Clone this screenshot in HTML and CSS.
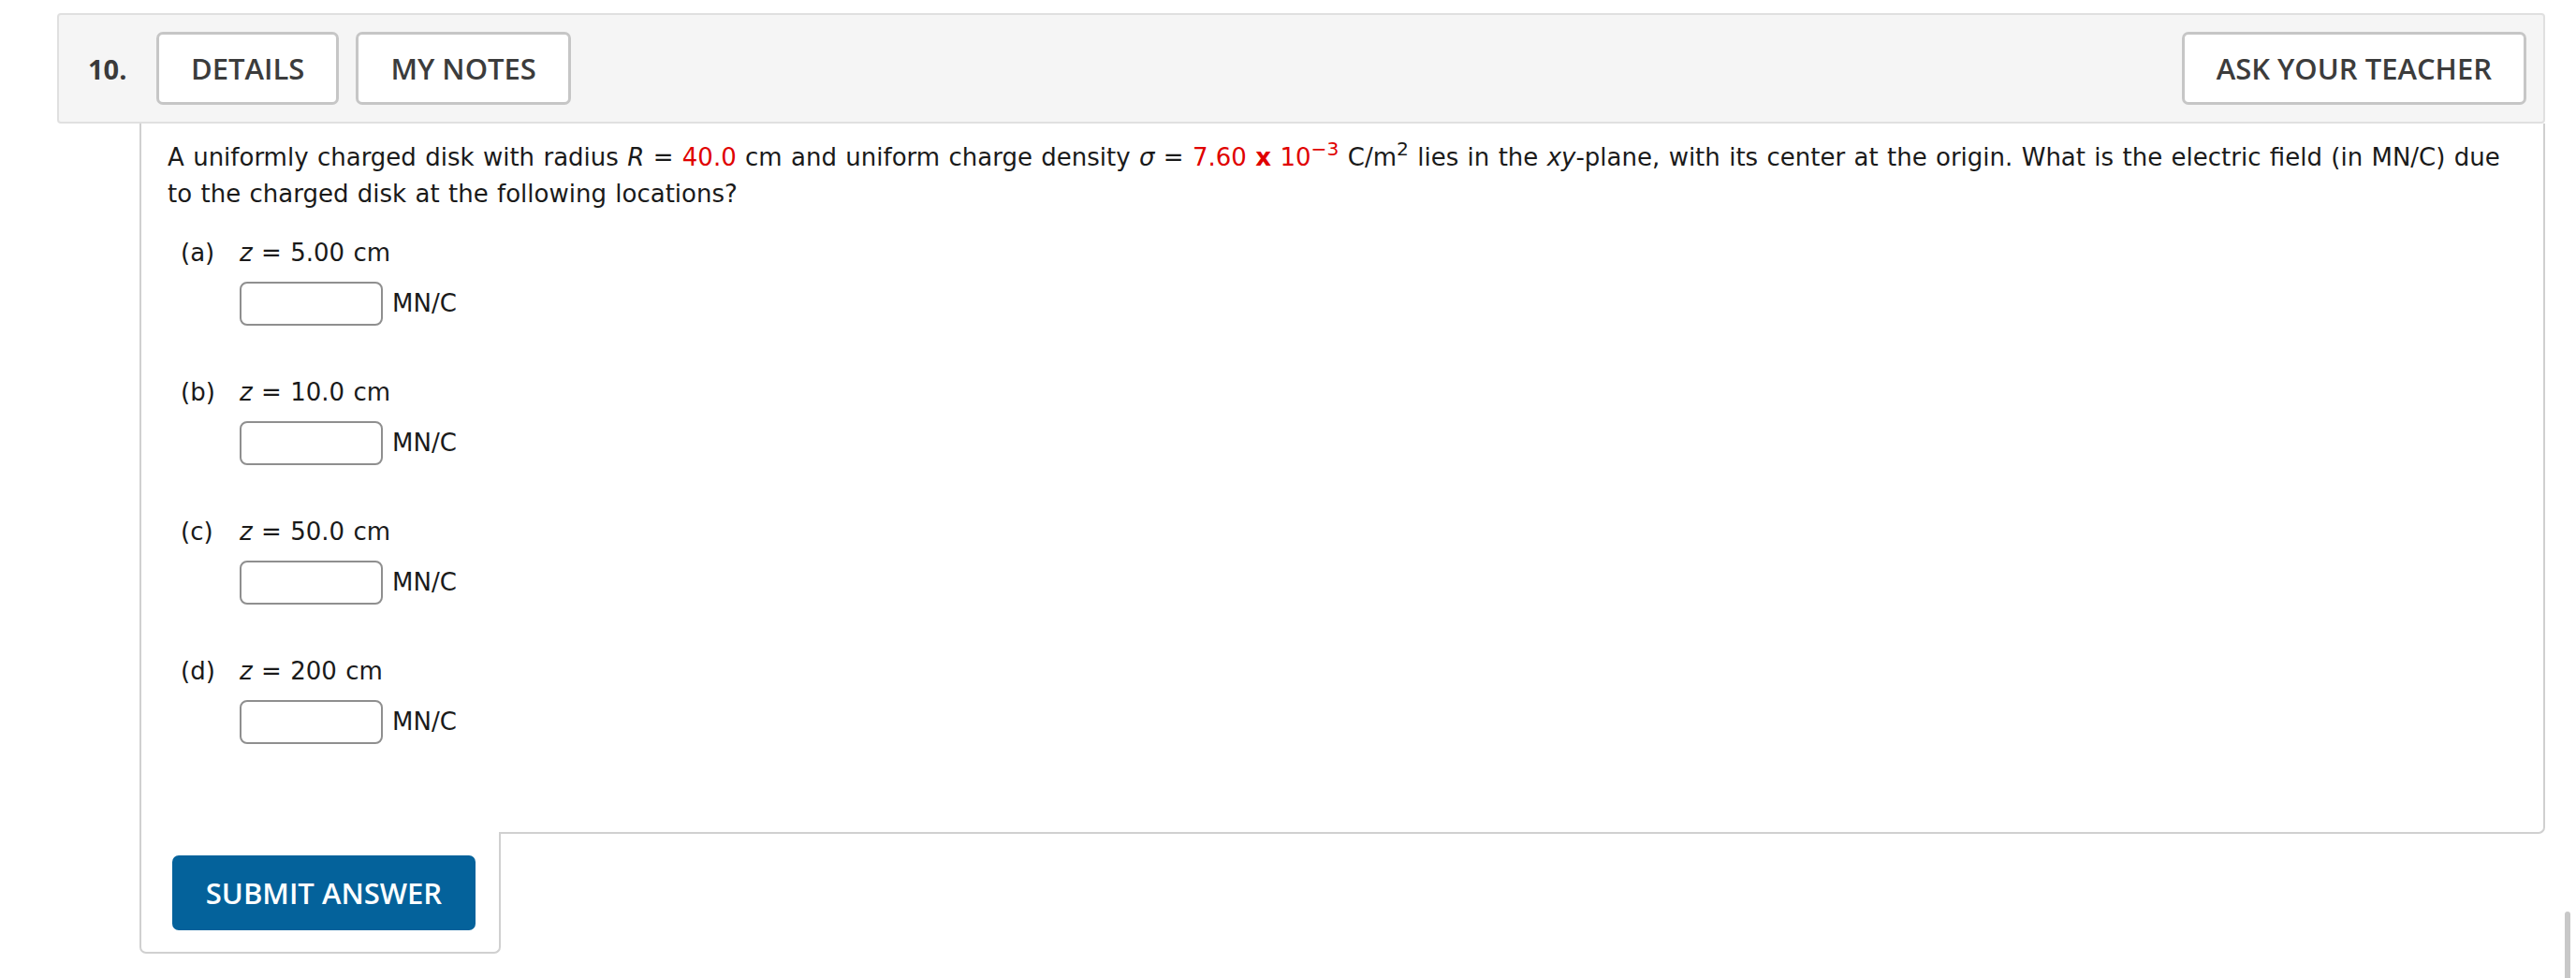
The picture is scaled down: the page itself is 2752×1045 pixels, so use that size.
FILE: index.html
```html
<!DOCTYPE html>
<html lang="en">
<head>
<meta charset="utf-8">
<title>Question 10</title>
<link rel="stylesheet" href="styles.css">
</head>
<body>
<div class="question">
  <div class="qhead">
    <span class="qnum">10.</span>
    <button class="hbtn">DETAILS</button>
    <button class="hbtn">MY NOTES</button>
    <span class="spacer"></span>
    <button class="hbtn">ASK YOUR TEACHER</button>
  </div>
  <div class="qcontent">
    <p class="prompt">A uniformly charged disk with radius <i>R</i> = <span class="red">40.0</span> cm and uniform charge density <i>σ</i> = <span class="red">7.60 <b>x</b> 10<sup>−3</sup></span> C/m<sup>2</sup> lies in the <i>xy</i>-plane, with its center at the origin. What is the electric field (in MN/C) due to the charged disk at the following locations?</p>
    <div class="part">
      <span class="plabel">(a)</span>
      <div class="pbody">
        <div class="pline"><i>z</i> = 5.00 cm</div>
        <div class="answer"><span class="ibox"></span><span class="unit">MN/C</span></div>
      </div>
    </div>
    <div class="part">
      <span class="plabel">(b)</span>
      <div class="pbody">
        <div class="pline"><i>z</i> = 10.0 cm</div>
        <div class="answer"><span class="ibox"></span><span class="unit">MN/C</span></div>
      </div>
    </div>
    <div class="part">
      <span class="plabel">(c)</span>
      <div class="pbody">
        <div class="pline"><i>z</i> = 50.0 cm</div>
        <div class="answer"><span class="ibox"></span><span class="unit">MN/C</span></div>
      </div>
    </div>
    <div class="part">
      <span class="plabel">(d)</span>
      <div class="pbody">
        <div class="pline"><i>z</i> = 200 cm</div>
        <div class="answer"><span class="ibox"></span><span class="unit">MN/C</span></div>
      </div>
    </div>
  </div>
  <div class="submit-tab">
    <button class="submit">SUBMIT ANSWER</button>
  </div>
</div>
<div class="scrollthumb"></div>
</body>
</html>
```
FILE: styles.css
```css
html, body {
  margin: 0;
  padding: 0;
  background: #ffffff;
}
body {
  font-family: "DejaVu Sans", Verdana, sans-serif;
  color: #1a1a1a;
}
.question {
  padding: 14px 33px 0 61px;
}
.qhead {
  display: flex;
  align-items: center;
  height: 114px;
  padding: 0 18px 0 31px;
  background: #f5f5f5;
  border: 2px solid #e0e0e0;
  border-radius: 4px;
}
.qnum {
  font-family: "Open Sans", sans-serif;
  font-weight: 700;
  font-size: 29px;
  color: #3a3a3a;
  width: 73px;
}
.spacer {
  flex: 1;
}
.hbtn {
  font-family: "Open Sans", sans-serif;
  font-weight: 600;
  font-size: 31px;
  color: #3c3c3c;
  background: #ffffff;
  border: 3px solid #c6c6c6;
  border-radius: 7px;
  height: 78px;
  padding: 0 34px;
  margin-right: 18px;
}
.hbtn:last-child {
  margin-right: 0;
}
.qcontent {
  margin-left: 88px;
  border-left: 2px solid #d0d0d0;
  border-right: 2px solid #d0d0d0;
  border-bottom: 2px solid #d0d0d0;
  border-bottom-right-radius: 7px;
  padding: 17px 20px 94px 28px;
  font-size: 26px;
  line-height: 39px;
  word-spacing: 1.1px;
}
.prompt {
  margin: 0 0 24px 0;
}
.red {
  color: #e00000;
}
sup {
  font-size: 0.78em;
  line-height: 0;
  vertical-align: 0.55em;
}
.part {
  display: flex;
  margin-left: 14px;
  margin-bottom: 52px;
}
.part:last-child {
  margin-bottom: 0;
}
.plabel {
  width: 63px;
  flex: none;
}
.pline {
  height: 39px;
}
.answer {
  display: flex;
  align-items: center;
  margin-top: 11px;
}
.ibox {
  display: block;
  width: 149px;
  height: 43px;
  border: 2px solid #8f8f8f;
  border-radius: 8px;
  background: #fff;
}
.unit {
  margin-left: 10px;
}
.submit-tab {
  margin-left: 88px;
  margin-top: -2px;
  width: 386px;
  background: #ffffff;
  border-left: 2px solid #d0d0d0;
  border-right: 2px solid #d0d0d0;
  border-bottom: 2px solid #d0d0d0;
  border-bottom-left-radius: 7px;
  border-bottom-right-radius: 7px;
  padding: 25px 0 23px 33px;
  box-sizing: border-box;
}
.submit {
  font-family: "Open Sans", sans-serif;
  font-weight: 600;
  font-size: 31px;
  color: #ffffff;
  background: #04629b;
  border: none;
  border-radius: 7px;
  width: 324px;
  height: 80px;
  padding: 0;
}
.scrollthumb {
  position: absolute;
  left: 2740px;
  top: 974px;
  width: 6px;
  height: 80px;
  border-radius: 3px;
  background: #c8c8c8;
}
```
